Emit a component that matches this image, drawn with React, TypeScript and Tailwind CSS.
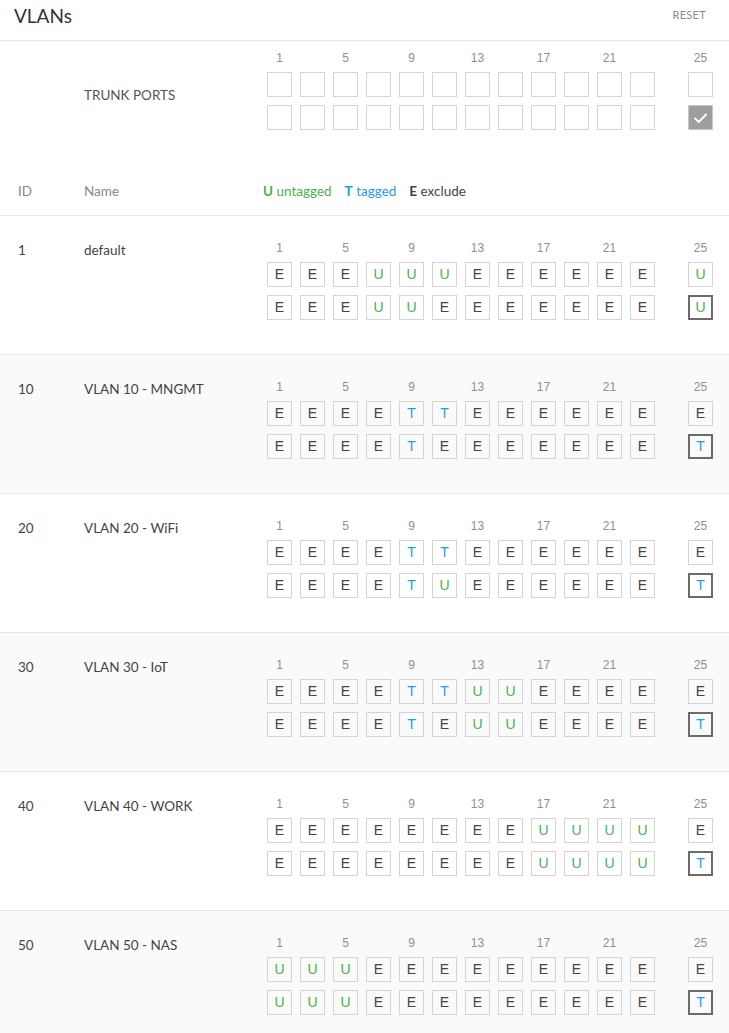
import React from 'react'

type Mode = 'U' | 'T' | 'E'

type Vlan = {
  id: number
  name: string
  top: string
  bottom: string
  p25: Mode
  p26: Mode
}

const vlans: Vlan[] = [
  { id: 1, name: 'default', top: 'EEEUUUEEEEEE', bottom: 'EEEUUEEEEEEE', p25: 'U', p26: 'U' },
  { id: 10, name: 'VLAN 10 - MNGMT', top: 'EEEETTEEEEEE', bottom: 'EEEETEEEEEEE', p25: 'E', p26: 'T' },
  { id: 20, name: 'VLAN 20 - WiFi', top: 'EEEETTEEEEEE', bottom: 'EEEETUEEEEEE', p25: 'E', p26: 'T' },
  { id: 30, name: 'VLAN 30 - IoT', top: 'EEEETTUUEEEE', bottom: 'EEEETEUUEEEE', p25: 'E', p26: 'T' },
  { id: 40, name: 'VLAN 40 - WORK', top: 'EEEEEEEEUUUU', bottom: 'EEEEEEEEUUUU', p25: 'E', p26: 'T' },
  { id: 50, name: 'VLAN 50 - NAS', top: 'UUUEEEEEEEEE', bottom: 'UUUEEEEEEEEE', p25: 'E', p26: 'T' },
]

const cols = Array.from({ length: 12 }, (_, i) => i)

const modeColor: Record<Mode, string> = {
  U: 'text-[#4caf50]',
  T: 'text-[#1e9ee6]',
  E: 'text-[#444]',
}

const PortLabels = () => (
  <div className="flex h-[14px] mb-[7px] text-[12px] leading-[14px] text-[#8f8f8f] [font-family:'Liberation_Sans',sans-serif]">
    <div className="flex gap-[8px]">
      {cols.map((i) => (
        <div key={i} className="w-[25px] text-center">
          {i % 2 === 0 ? 2 * i + 1 : ''}
        </div>
      ))}
    </div>
    <div className="w-[25px] ml-[33px] text-center">25</div>
  </div>
)

const ModeBox = ({ mode, selected }: { mode: Mode; selected?: boolean }) => (
  <div
    className={`w-[25px] h-[25px] flex items-center justify-center text-[14px] [font-family:'Liberation_Sans',sans-serif] ${modeColor[mode]} ${
      selected ? 'border-2 border-[#6b6b6b]' : 'border border-[#d4d4d4]'
    }`}
  >
    {mode}
  </div>
)

const ModeRow = ({ modes, last, selected }: { modes: string; last: Mode; selected?: boolean }) => (
  <div className="flex">
    <div className="flex gap-[8px]">
      {cols.map((i) => (
        <ModeBox key={i} mode={modes[i] as Mode} />
      ))}
    </div>
    <div className="ml-[33px]">
      <ModeBox mode={last} selected={selected} />
    </div>
  </div>
)

const EmptyBox = () => <div className="w-[25px] h-[25px] border border-[#d4d4d4]" />

const CheckedBox = () => (
  <div className="w-[25px] h-[25px] border border-[#c8c8c8] bg-[#9e9e9e] flex items-center justify-center">
    <svg width="15" height="12" viewBox="0 0 15 12" fill="none">
      <path d="M2 6.5 L5.8 10 L13 2.5" stroke="#fff" strokeWidth="2" strokeLinecap="round" strokeLinejoin="round" />
    </svg>
  </div>
)

const TrunkRow = ({ checked }: { checked?: boolean }) => (
  <div className="flex">
    <div className="flex gap-[8px]">
      {cols.map((i) => (
        <EmptyBox key={i} />
      ))}
    </div>
    <div className="ml-[33px]">{checked ? <CheckedBox /> : <EmptyBox />}</div>
  </div>
)

export default function App() {
  return (
    <div className="w-[729px] min-h-[1033px] bg-white text-[#333] [font-family:Lato,'Liberation_Sans',sans-serif]">
      <div className="h-[41px] flex items-center justify-between pl-[14px] pr-[23px] border-b border-[#e6e6e6] shadow-[0_1px_2px_rgba(0,0,0,0.04)]">
        <h1 className="text-[19px] leading-[24px] text-[#333] -mt-[8px]">VLANs</h1>
        <button className="text-[11px] tracking-[0.3px] text-[#8a8a8a] -mt-[9px]">RESET</button>
      </div>

      <div className="h-[175px] flex flex-col border-b border-[#e8e8e8]">
        <div className="flex pt-[10px]">
          <div className="w-[84px]" />
          <div className="w-[183px] pt-[34px] text-[13.5px] leading-[20px] text-[#555]">TRUNK PORTS</div>
          <div className="flex flex-col">
            <PortLabels />
            <div className="flex flex-col gap-[8px]">
              <TrunkRow />
              <TrunkRow checked />
            </div>
          </div>
        </div>
        <div className="mt-auto pb-[14px] flex text-[13.5px] leading-[20px]">
          <div className="w-[84px] pl-[18px] text-[#888]">ID</div>
          <div className="w-[179px] text-[#888]">Name</div>
          <div className="flex gap-[13px]">
            <span className="text-[#4caf50]">
              <b className="font-bold">U</b> untagged
            </span>
            <span className="text-[#1e9ee6]">
              <b className="font-bold">T</b> tagged
            </span>
            <span className="text-[#444]">
              <b className="font-bold">E</b> exclude
            </span>
          </div>
        </div>
      </div>

      {vlans.map((v, idx) => (
        <div
          key={v.id}
          className={`flex h-[139px] border-b border-[#e8e8e8] ${idx % 2 === 1 ? 'bg-[#fafafa]' : 'bg-white'}`}
        >
          <div className="w-[84px] pl-[18px] pt-[24px] text-[13.5px] leading-[20px] text-[#444]">{v.id}</div>
          <div className="w-[183px] pt-[24px] text-[13.5px] leading-[20px] text-[#444]">{v.name}</div>
          <div className="flex flex-col pt-[25px]">
            <PortLabels />
            <div className="flex flex-col gap-[8px]">
              <ModeRow modes={v.top} last={v.p25} />
              <ModeRow modes={v.bottom} last={v.p26} selected />
            </div>
          </div>
        </div>
      ))}
    </div>
  )
}
